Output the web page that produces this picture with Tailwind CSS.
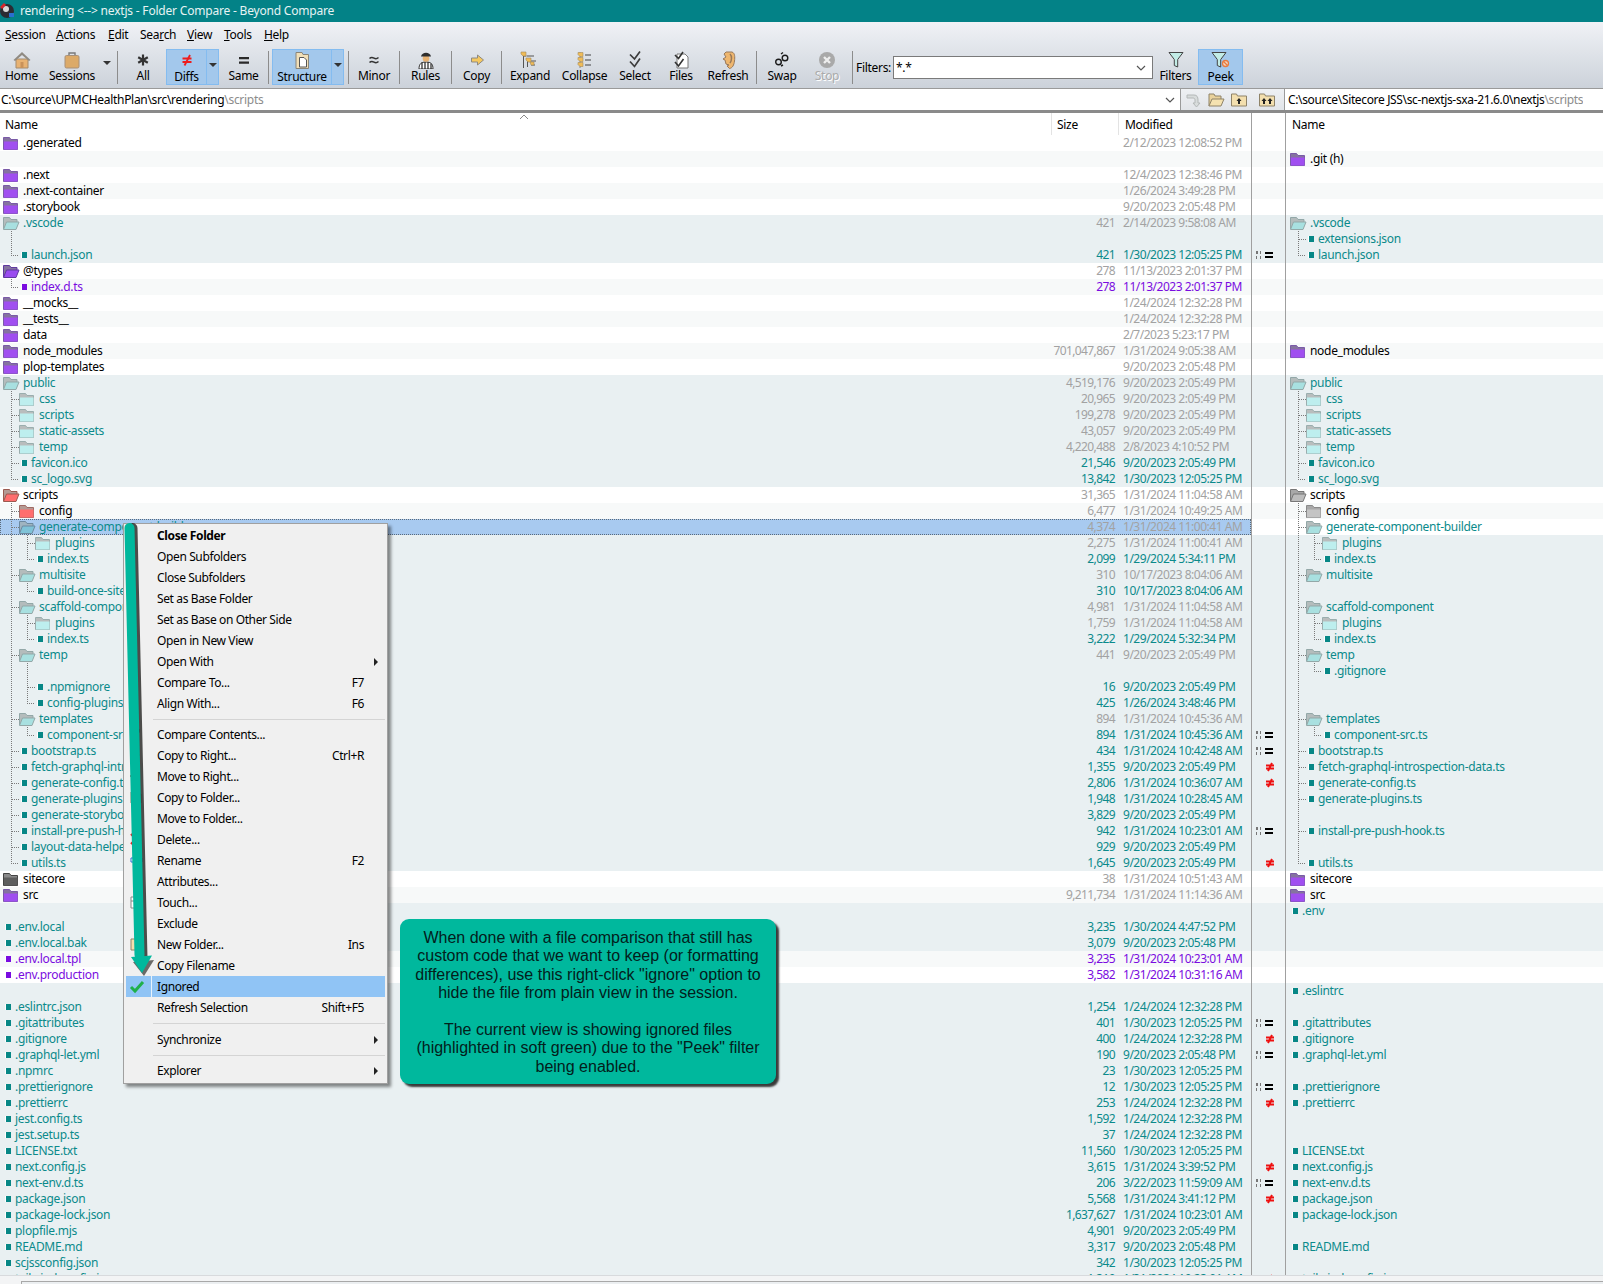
<!doctype html>
<html>
<head>
<meta charset="utf-8">
<title>rendering &lt;--&gt; nextjs - Folder Compare - Beyond Compare</title>
<script src="https://cdn.jsdelivr.net/npm/@tailwindcss/browser@4"></script>
</head>
<body class="m-0 bg-white">
<div class="relative flex h-[1284px] w-[1603px] flex-col overflow-hidden font-['Noto_Sans',sans-serif] text-[12px] leading-4 tracking-[-0.3px] text-black">

  <!-- title bar -->
  <div class="flex h-[22px] shrink-0 items-center bg-[#038287] text-[#e6f3f3]">
    <svg width="16" height="18" viewBox="0 0 16 18" class="ml-0 shrink-0"><circle cx="7" cy="9" r="7" fill="#2b2b33"/><circle cx="6" cy="7" r="3" fill="#d8d8d8"/><path d="M0 5 4 1 6 3 2 7z" fill="#d8262c"/><rect x="9" y="11" width="5" height="4" fill="#2a6fd0"/></svg>
    <span class="ml-[4px] tracking-[-0.2px]">rendering &lt;--&gt; nextjs - Folder Compare - Beyond Compare</span>
  </div>

  <!-- menu + toolbar share one gradient -->
  <div class="h-[66px] shrink-0 bg-gradient-to-b from-[#f0f2f6] to-[#ccd2da]">
    <nav class="flex h-[26px] items-center">
      <span class="ml-[5px] w-[51px]"><u>S</u>ession</span>
      <span class="w-[52px]"><u>A</u>ctions</span>
      <span class="w-[32px]"><u>E</u>dit</span>
      <span class="w-[47px]">Sea<u>r</u>ch</span>
      <span class="w-[37px]"><u>V</u>iew</span>
      <span class="w-[40px]"><u>T</u>ools</span>
      <span><u>H</u>elp</span>
    </nav>
    <div id="toolbar" class="flex h-[40px] items-start">
      <div class="mt-px flex h-9 w-[43px] flex-col items-center"><svg class="mt-[2px] shrink-0" width="20" height="18" viewBox="0 0 20 18"><path d="M4 8h12v9H4z" fill="#e8b272" stroke="#a58b6c"/><path d="M10 1 1.5 9l1.5 1 7-6 7 6 1.5-1z" fill="#8f8a82"/><rect x="8.5" y="11" width="3" height="6" fill="#c9925a"/></svg><span class="leading-[14px]">Home</span></div>
      <div class="mt-px flex h-9 w-[58px] flex-col items-center"><svg class="mt-[2px] shrink-0" width="20" height="18" viewBox="0 0 20 18"><path d="M7 4V2h6v2" fill="none" stroke="#7a7a7a" stroke-width="1.4"/><rect x="3" y="4.500" width="14" height="12.500" rx="1.500" fill="#dcaa68" stroke="#a89078"/></svg><span class="leading-[14px]">Sessions</span></div>
      <div class="flex h-[30px] w-[11px] items-center justify-center"><svg width="8" height="4"><path d="M0 0h8L4 4z" fill="#333"/></svg></div>
      <div class="ml-[5px] mt-[3px] h-[33px] w-px bg-[#8c8c8c]"></div>

      <div class="ml-[2px] mt-px flex h-9 w-[46px] flex-col items-center"><svg class="mt-[2px] shrink-0" width="20" height="18" viewBox="0 0 20 18"><path d="M10 3.500v11M5.200 6.200l9.600 5.600M14.800 6.200l-9.600 5.600" stroke="#333" stroke-width="2.200"/></svg><span class="leading-[14px]">All</span></div>
      <div class="mt-px flex h-9 w-[53px] border border-[#84bcf0] bg-[#a3c8ec]">
        <div class="flex w-[39px] flex-col items-center"><svg class="mt-px shrink-0" width="20" height="18" viewBox="0 0 20 18"><path d="M5.500 7.500h9M5.500 11h9" stroke="#ee1c1c" stroke-width="1.800"/><path d="M13 4 7.500 14.500" stroke="#ee1c1c" stroke-width="1.800"/></svg><span class="leading-[14px] pt-px">Diffs</span></div>
        <div class="flex w-[12px] items-center justify-center border-l border-[#84bcf0] pb-[5px]"><svg width="8" height="4"><path d="M0 0h8L4 4z" fill="#333"/></svg></div>
      </div>
      <div class="mt-px flex h-9 w-[49px] flex-col items-center"><svg class="mt-[2px] shrink-0" width="20" height="18" viewBox="0 0 20 18"><path d="M5 6h10v2.300H5zM5 10.500h10v2.300H5z" fill="#2a2a2a"/></svg><span class="leading-[14px]">Same</span></div>
      <div class="mt-[3px] h-[33px] w-px bg-[#8c8c8c]"></div>

      <div class="ml-[3px] mt-px flex h-9 w-[72px] border border-[#84bcf0] bg-[#a3c8ec]">
        <div class="flex w-[58px] flex-col items-center"><svg class="mt-px shrink-0" width="20" height="18" viewBox="0 0 20 18"><path d="M4 1.500h6l1 2h5.500v14H4z" fill="#f1dfb8" stroke="#8a8578"/><path d="M7.500 6.500h4.500l2.500 2.500v7h-7z" fill="#fff" stroke="#555"/></svg><span class="leading-[14px] pt-px">Structure</span></div>
        <div class="flex w-[12px] items-center justify-center border-l border-[#84bcf0] pb-[5px]"><svg width="8" height="4"><path d="M0 0h8L4 4z" fill="#333"/></svg></div>
      </div>
      <div class="ml-[4px] mt-[3px] h-[33px] w-px bg-[#8c8c8c]"></div>

      <div class="mt-px flex h-9 w-[50px] flex-col items-center"><svg class="mt-[2px] shrink-0" width="20" height="18" viewBox="0 0 20 18"><path d="M5.500 7.500c2-2 3.500-1 4.500-.4s2.800 1 4.500-.6M5.500 11.500c2-2 3.500-1 4.500-.4s2.800 1 4.500-.6" fill="none" stroke="#333" stroke-width="1.500"/></svg><span class="leading-[14px]">Minor</span></div>
      <div class="mt-[3px] h-[33px] w-px bg-[#8c8c8c]"></div>
      <div class="mt-px flex h-9 w-[51px] flex-col items-center"><svg class="mt-[2px] shrink-0" width="20" height="18" viewBox="0 0 20 18"><path d="M3 18c0-5 2-7 7-7s7 2 7 7z" fill="#fff" stroke="#333"/><path d="M6 11.500V18M9 11V18M12 11V18M15 12.500V18" stroke="#222" stroke-width="1.200"/><circle cx="10" cy="7.500" r="3.300" fill="#e8b272"/><path d="M5 5.500C6 .5 14 .5 15 5.500z" fill="#2e2e2e"/></svg><span class="leading-[14px]">Rules</span></div>
      <div class="mt-[3px] h-[33px] w-px bg-[#8c8c8c]"></div>
      <div class="mt-px flex h-9 w-[49px] flex-col items-center"><svg class="mt-[2px] shrink-0" width="20" height="18" viewBox="0 0 20 18"><path d="M4.500 7h6V4l6 5-6 5v-3h-6z" fill="#f5c85f" stroke="#8f8a80"/></svg><span class="leading-[14px]">Copy</span></div>
      <div class="mt-[3px] h-[33px] w-px bg-[#8c8c8c]"></div>

      <div class="mt-px flex h-9 w-[56px] flex-col items-center"><svg class="mt-[2px] shrink-0" width="20" height="18" viewBox="0 0 20 18"><path d="M3.500 3v14M7.500 9v7M3.500 5h3M7 5h7M11 10h5M11 14h4" stroke="#555" fill="none"/><path d="M1 1h5v4H3L1 3zM6 7h5v4H8L6 9zM10 11h4v3h-3z" fill="#f0bc58" stroke="#a58b5c" stroke-width=".6"/></svg><span class="leading-[14px]">Expand</span></div>
      <div class="mt-px flex h-9 w-[53px] flex-col items-center"><svg class="mt-[2px] shrink-0" width="20" height="18" viewBox="0 0 20 18"><path d="M5 1v16" stroke="#888"/><path d="M10 4h6M10 9h6M10 14h6" stroke="#444" stroke-width="1.200"/><path d="M3 1.500h5v4H5L3 3.500zM3 6.500h5v4H5L3 8.500zM3 11.500h5v4H5l-2-2z" fill="#f0bc58" stroke="#a58b5c" stroke-width=".6"/></svg><span class="leading-[14px]">Collapse</span></div>
      <div class="mt-px flex h-9 w-[48px] flex-col items-center"><svg class="mt-[2px] shrink-0" width="20" height="18" viewBox="0 0 20 18"><path d="M5 3.500 9.500 8 15 .5M5 10.500l4.500 5L15 7.500" fill="none" stroke="#3c3c3c" stroke-width="1.700"/></svg><span class="leading-[14px]">Select</span></div>
      <div class="mt-px flex h-9 w-[44px] flex-col items-center"><svg class="mt-[2px] shrink-0" width="20" height="18" viewBox="0 0 20 18"><path d="M6 3h8l3 3v11H6z" fill="#fff" stroke="#777"/><path d="M4 4l3.500 3.500L12 1M4 11l3.500 4 5-7" fill="none" stroke="#333" stroke-width="1.600"/></svg><span class="leading-[14px]">Files</span></div>
      <div class="mt-px flex h-9 w-[50px] flex-col items-center"><svg class="mt-[2px] shrink-0" width="20" height="18" viewBox="0 0 20 18"><path d="M8 1h6c3 1 3 5 2.500 9-.5 4-2 7-5 7.500L9 15l2-1-3-1-1-4-2-1 3-2-2-3z" fill="#eeb66e" stroke="#98785a"/><path d="M12 3c2 2 2 6 0 9" fill="none" stroke="#98785a" stroke-width="1.500"/></svg><span class="leading-[14px]">Refresh</span></div>
      <div class="ml-[3px] mt-[3px] h-[33px] w-px bg-[#8c8c8c]"></div>

      <div class="mt-px flex h-9 w-[50px] flex-col items-center"><svg class="mt-[2px] shrink-0" width="20" height="18" viewBox="0 0 20 18"><circle cx="6.500" cy="11" r="2.800" fill="none" stroke="#1a1a1a" stroke-width="1.400"/><circle cx="13" cy="7" r="2.800" fill="none" stroke="#1a1a1a" stroke-width="1.400"/><path d="M9 3l2-1.500M11 14l-2 1" stroke="#1a1a1a" stroke-width="1.400"/></svg><span class="leading-[14px]">Swap</span></div>
      <div class="mt-px flex h-9 w-[40px] flex-col items-center"><svg class="mt-[2px] shrink-0" width="20" height="18" viewBox="0 0 20 18"><circle cx="10" cy="9" r="8" fill="#a9a9a9"/><path d="M7 6l6 6M13 6l-6 6" stroke="#eee" stroke-width="2.400"/></svg><span class="leading-[14px] text-[#ababab] [text-shadow:1px_1px_0_#fff]">Stop</span></div>
      <div class="ml-[5px] mt-[3px] h-[33px] w-px bg-[#8c8c8c]"></div>

      <span class="ml-[3px] mt-[12px] w-[34px]">Filters:</span>
      <div class="ml-[3px] mt-[8px] flex h-[23px] w-[260px] items-center border border-[#7a7a7a] bg-white pl-[2px] pr-[6px]"><span class="flex-1 text-[12px] leading-4">*.*</span><svg width="10" height="6"><path d="M1 1l4 4 4-4" fill="none" stroke="#555" stroke-width="1.200"/></svg></div>
      <div class="mt-px flex h-9 w-[45px] flex-col items-center"><svg class="mt-[2px] shrink-0" width="20" height="18" viewBox="0 0 20 18"><path d="M3 1.500h14L11.700 8.500V16l-3.400-1.500v-6z" fill="#c2ece6" stroke="#444"/></svg><span class="leading-[14px]">Filters</span></div>
      <div class="mt-px flex h-9 w-[45px] flex-col items-center border border-[#84bcf0] bg-[#a3c8ec]"><svg class="mt-px shrink-0" width="20" height="18" viewBox="0 0 20 18"><path d="M1 1.500h14L9.700 8.500V16l-3.400-1.500v-6z" fill="#c2ece6" stroke="#444"/><circle cx="14.500" cy="12.500" r="3" fill="#f3d6c0" stroke="#e87a3c" stroke-width="1.300"/><path d="M12.500 10.500l4 4" stroke="#e87a3c" stroke-width="1.300"/></svg><span class="leading-[14px] pt-px">Peek</span></div>
    </div>
  </div>

  <!-- address bars -->
  <div class="flex h-[25px] shrink-0 border-b-[3px] border-t border-b-[#8a8a8a] border-t-[#9a9a9a] bg-[#e6e9ed]">
    <div class="flex w-[1181px] items-center border-r border-[#9a9a9a] bg-white pl-px pr-[5px]">
      <span class="flex-1 truncate">C:\source\UPMCHealthPlan\src\rendering<span class="text-[#8c8c8c]">\scripts</span></span>
      <svg width="10" height="6"><path d="M1 1l4 4 4-4" fill="none" stroke="#555" stroke-width="1.200"/></svg>
    </div>
    <div class="flex w-[103px] items-center bg-gradient-to-b from-[#eef0f3] to-[#e2e5e9]">
      <svg class="ml-[5px]" width="16" height="16" viewBox="0 0 16 16"><path d="M1 3h7c3 0 4 2 4 5v3h2l-3.500 4L7 11h2V8c0-1-.5-2-2-2H1z" fill="#d8dcdc" stroke="#b4b8b8"/></svg>
      <svg class="ml-[6px]" width="17" height="15" viewBox="0 0 17 15"><path d="M1 14V2h5l1 2h6v3" fill="#e9d29c" stroke="#8f8368"/><path d="M1 14l3-7h12l-3 7z" fill="#f5e2b0" stroke="#8f8368"/></svg>
      <svg class="ml-[6px]" width="16" height="15" viewBox="0 0 16 15"><path d="M.5 14V2h5l1 2h9v10z" fill="#f3dfae" stroke="#8f8368"/><path d="M8 6l-2.500 3H7v3h2V9h1.500z" fill="#222"/></svg>
      <svg class="ml-[12px]" width="16" height="15" viewBox="0 0 16 15"><path d="M.5 14V2h5l1 2h9v10z" fill="#f3dfae" stroke="#8f8368"/><path d="M5 6 2.500 9H4v3h2V9h1.500zM11 6 8.500 9H10v3h2V9h1.500z" fill="#222"/></svg>
    </div>
    <div class="flex flex-1 items-center border-l border-[#9a9a9a] bg-white pl-[3px]"><span class="truncate tracking-[-0.35px]">C:\source\Sitecore JSS\sc-nextjs-sxa-21.6.0\nextjs<span class="text-[#8c8c8c]">\scripts</span></span></div>
  </div>

  <!-- column headers -->
  <div class="flex h-[22px] shrink-0 bg-white">
    <div class="flex w-[1051px] shrink-0 pt-[4px]"><span class="w-[519px] pl-[5px]">Name</span><svg class="-mt-[3px]" width="10" height="6"><path d="M1 5l4-4 4 4" fill="none" stroke="#888"/></svg></div>
    <div class="w-[67px] shrink-0 border-l border-[#e3e3e3] pl-[5px] pt-[4px]">Size</div>
    <div class="w-[133px] shrink-0 border-l border-[#e3e3e3] pl-[6px] pt-[4px]">Modified</div>
    <div class="w-[35px] shrink-0 border-x border-[#a0a0a0]"></div>
    <div class="flex-1 pl-[6px] pt-[4px]">Name</div>
  </div>

  <!-- comparison rows -->
  <div id="rows" class="h-[1140px] shrink-0 overflow-hidden"></div>

  <!-- bottom edge -->
  <div class="flex flex-1 flex-col border-t border-[#d8dadd] bg-[#f3f4f5] pl-[21px] pt-[5px]"><div class="flex-1 border-l border-t border-[#a8a8a8] bg-[#eceff1]"></div></div>

  <!-- context menu -->
  <div id="menu" class="absolute left-[123px] top-[523px] flex w-[265px] flex-col border border-[#a0a0a0] bg-[#f0f0f0] pb-[2px] pt-px tracking-[-0.38px] shadow-[3px_3px_3px_rgba(0,0,0,0.45)]"></div>

  <!-- annotation arrow -->
  <svg class="pointer-events-none absolute left-[110px] top-[515px]" width="60" height="470" viewBox="110 515 60 470">
    <path d="M132.500 528 142.500 958" stroke="#30302e" stroke-width="10" stroke-linecap="round" opacity=".85"/>
    <path d="M133 962 154 960 144 976z" fill="#30302e" opacity=".7"/>
    <path d="M129.500 528 139.500 955" stroke="#00b89d" stroke-width="10" stroke-linecap="round"/>
    <path d="M131 957 152 955.500 142 973z" fill="#00b89d"/>
  </svg>

  <!-- annotation callout -->
  <div class="absolute left-[400px] top-[919px] h-[165px] w-[376px] rounded-[9px] bg-[#00b89d] pt-[10px] text-center font-['Liberation_Sans',sans-serif] text-[16px] leading-[18.4px] tracking-normal text-[#03201b] shadow-[3px_3px_2px_#3a3a3a]">
    When done with a file comparison that still has<br>custom code that we want to keep (or formatting<br>differences), use this right-click "ignore" option to<br>hide the file from plain view in the session.<br><br>The current view is showing ignored files<br>(highlighted in soft green) due to the "Peek" filter<br>being enabled.
  </div>
</div>

<script>
const K={
 pc:['#85739f','#a04ff0','#7a5aa8',0], po:['#85739f','#9a4cf0','#5f3aa0',1],
 rc:['#b49a94','#ff6e6e','#a06a64',0], ro:['#b49a94','#ff6e6e','#9a5a50',1],
 gc:['#a8a8a8','#c4c4c4','#8a8a8a',0], go:['#a8a8a8','#bdbdbd','#777777',1],
 dc:['#8a8a8a','#5e5e5e','#444444',0],
 cc:['#b9bdbd','#bdeeee','#9aaeae',0], co:['#b4bcbc','#a8e0e0','#93a8a8',1], so:['#9fb4c0','#7fc3d8','#6d8aa0',1]
};
const TXT={b:'text-black',t:'text-[#0b8a8b]',p:'text-[#7a0ce0]',g:'text-[#a2a2a2]'};
const SQ={t:'bg-[#078786]',p:'bg-[#7a0ce0]'};
function folder(k){const [tab,body,edge,open]=K[k];
 return open
 ?`<svg class="shrink-0" width="20" height="16" viewBox="0 0 20 16"><path d="M.5 14V2.500h6l1.500 2h6V7" fill="${tab}" stroke="${edge}"/><path d="M.5 14.500 3.500 7H16l-3 7.500z" fill="${body}" stroke="${edge}"/></svg>`
 :`<svg class="shrink-0" width="20" height="16" viewBox="0 0 20 16"><path d="M.5 2.500h6l1.500 2h6.500v10H.5z" fill="${tab}" stroke="${edge}"/><path d="M1 6.500h13.500v8H1z" fill="${body}"/></svg>`;}
function guide(c){const d={T:'M8.500 0V16M8.500 8.500H16',L:'M8.500 0V8.500H16',I:'M8.500 0V16',' ':''}[c];
 return `<svg class="shrink-0" width="16" height="16"><path d="${d}" fill="none" stroke="#7a7a7a" stroke-dasharray="1 1" shape-rendering="crispEdges"/></svg>`;}
function name(e,pad,clip){ if(!e) return `<div class="flex h-4 min-w-0 flex-1 ${pad}"></div>`;
 const [g,k,n,c]=e; let h=[...g].map(guide).join('');
 if(k) h+=folder(k); else if(n) h+=`<span class="flex w-3 shrink-0 items-center"><span class="ml-[3px] h-[6px] w-[5px] ${SQ[c]} shadow-[-1px_0_0_#fff]"></span></span>`;
 h+=`<span class="${TXT[c]||''}">${n||''}</span>`;
 if(clip) h=`<div class="flex h-4 w-[120px] shrink-0 items-center overflow-hidden">${h}</div>`;
 return `<div class="flex h-4 min-w-0 flex-1 items-center whitespace-nowrap ${pad}">${h}</div>`;}
const NE=`<svg class="ml-[13px]" width="10" height="12" viewBox="0 0 10 12"><path d="M1 4.500h8M1 7.500h8M7 2 3 10" stroke="#ee1010" stroke-width="2" fill="none"/></svg>`;
const EQ=`<svg class="ml-[3px]" width="18" height="10" viewBox="0 0 18 10"><path d="M1 1h2v3H1zM5 1h1v3H5zM1 6h1v3H1zM5 6h1v3H5z" fill="#777"/><path d="M10 2h8v2h-8zM10 6h8v2h-8z" fill="#000"/></svg>`;

const G=new Set([5,6,7,15,16,17,18,19,20,21]);for(let i=25;i<=45;i++)G.add(i);[48,49,50].forEach(i=>G.add(i));for(let i=53;i<=71;i++)G.add(i);

const L={
0:['','pc','.generated','b','','2/12/2023 12:08:52 PM','g'],
2:['','pc','.next','b','','12/4/2023 12:38:46 PM','g'],
3:['','pc','.next-container','b','','1/26/2024 3:49:28 PM','g'],
4:['','pc','.storybook','b','','9/20/2023 2:05:48 PM','g'],
5:['','co','.vscode','t','421','2/14/2023 9:58:08 AM','g'],
6:['I','','','t','','',''],
7:['L','','launch.json','t','421','1/30/2023 12:05:25 PM','t','='],
8:['','po','@types','b','278','11/13/2023 2:01:37 PM','g'],
9:['L','','index.d.ts','p','278','11/13/2023 2:01:37 PM','p'],
10:['','pc','__mocks__','b','','1/24/2024 12:32:28 PM','g'],
11:['','pc','__tests__','b','','1/24/2024 12:32:28 PM','g'],
12:['','pc','data','b','','2/7/2023 5:23:17 PM','g'],
13:['','pc','node_modules','b','701,047,867','1/31/2024 9:05:38 AM','g'],
14:['','pc','plop-templates','b','','9/20/2023 2:05:48 PM','g'],
15:['','co','public','t','4,519,176','9/20/2023 2:05:49 PM','g'],
16:['T','cc','css','t','20,965','9/20/2023 2:05:49 PM','g'],
17:['T','cc','scripts','t','199,278','9/20/2023 2:05:49 PM','g'],
18:['T','cc','static-assets','t','43,057','9/20/2023 2:05:49 PM','g'],
19:['T','cc','temp','t','4,220,488','2/8/2023 4:10:52 PM','g'],
20:['T','','favicon.ico','t','21,546','9/20/2023 2:05:49 PM','t'],
21:['L','','sc_logo.svg','t','13,842','1/30/2023 12:05:25 PM','t'],
22:['','ro','scripts','b','31,365','1/31/2024 11:04:58 AM','g'],
23:['T','rc','config','b','6,477','1/31/2024 10:49:25 AM','g'],
24:['T','so','generate-component-builder','t','4,374','1/31/2024 11:00:41 AM','g'],
25:['IT','cc','plugins','t','2,275','1/31/2024 11:00:41 AM','g'],
26:['IL','','index.ts','t','2,099','1/29/2024 5:34:11 PM','t'],
27:['T','co','multisite','t','310','10/17/2023 8:04:06 AM','g'],
28:['IL','','build-once-site.ts','t','310','10/17/2023 8:04:06 AM','t'],
29:['T','co','scaffold-component','t','4,981','1/31/2024 11:04:58 AM','g'],
30:['IT','cc','plugins','t','1,759','1/31/2024 11:04:58 AM','g'],
31:['IL','','index.ts','t','3,222','1/29/2024 5:32:34 PM','t'],
32:['T','co','temp','t','441','9/20/2023 2:05:49 PM','g'],
33:['II','','','t','','',''],
34:['IT','','.npmignore','t','16','9/20/2023 2:05:49 PM','t'],
35:['IL','','config-plugins.ts','t','425','1/26/2024 3:48:46 PM','t'],
36:['T','co','templates','t','894','1/31/2024 10:45:36 AM','g'],
37:['IL','','component-src.ts','t','894','1/31/2024 10:45:36 AM','t','='],
38:['T','','bootstrap.ts','t','434','1/31/2024 10:42:48 AM','t','='],
39:['T','','fetch-graphql-introspection-data.ts','t','1,355','9/20/2023 2:05:49 PM','t','!'],
40:['T','','generate-config.ts','t','2,806','1/31/2024 10:36:07 AM','t','!'],
41:['T','','generate-plugins.ts','t','1,948','1/31/2024 10:28:45 AM','t'],
42:['T','','generate-storybook.ts','t','3,829','9/20/2023 2:05:49 PM','t'],
43:['T','','install-pre-push-hook.ts','t','942','1/31/2024 10:23:01 AM','t','='],
44:['T','','layout-data-helper.ts','t','929','9/20/2023 2:05:49 PM','t'],
45:['L','','utils.ts','t','1,645','9/20/2023 2:05:49 PM','t','!'],
46:['','dc','sitecore','b','38','1/31/2024 10:51:43 AM','g'],
47:['','pc','src','b','9,211,734','1/31/2024 11:14:36 AM','g'],
49:['','','.env.local','t','3,235','1/30/2024 4:47:52 PM','t'],
50:['','','.env.local.bak','t','3,079','9/20/2023 2:05:48 PM','t'],
51:['','','.env.local.tpl','p','3,235','1/31/2024 10:23:01 AM','p'],
52:['','','.env.production','p','3,582','1/31/2024 10:31:16 AM','p'],
54:['','','.eslintrc.json','t','1,254','1/24/2024 12:32:28 PM','t'],
55:['','','.gitattributes','t','401','1/30/2023 12:05:25 PM','t','='],
56:['','','.gitignore','t','400','1/24/2024 12:32:28 PM','t','!'],
57:['','','.graphql-let.yml','t','190','9/20/2023 2:05:48 PM','t','='],
58:['','','.npmrc','t','23','1/30/2023 12:05:25 PM','t'],
59:['','','.prettierignore','t','12','1/30/2023 12:05:25 PM','t','='],
60:['','','.prettierrc','t','253','1/24/2024 12:32:28 PM','t','!'],
61:['','','jest.config.ts','t','1,592','1/24/2024 12:32:28 PM','t'],
62:['','','jest.setup.ts','t','37','1/24/2024 12:32:28 PM','t'],
63:['','','LICENSE.txt','t','11,560','1/30/2023 12:05:25 PM','t'],
64:['','','next.config.js','t','3,615','1/31/2024 3:39:52 PM','t','!'],
65:['','','next-env.d.ts','t','206','3/22/2023 11:59:09 AM','t','='],
66:['','','package.json','t','5,568','1/31/2024 3:41:12 PM','t','!'],
67:['','','package-lock.json','t','1,637,627','1/31/2024 10:23:01 AM','t'],
68:['','','plopfile.mjs','t','4,901','9/20/2023 2:05:49 PM','t'],
69:['','','README.md','t','3,317','9/20/2023 2:05:48 PM','t'],
70:['','','scjssconfig.json','t','342','1/30/2023 12:05:25 PM','t'],
71:['','','tailwind.config.js','t','1,310','1/31/2024 10:23:01 AM','t','!']
};
const R={
1:['','pc','.git (h)','b'],5:['','co','.vscode','t'],6:['T','','extensions.json','t'],7:['L','','launch.json','t'],
13:['','pc','node_modules','b'],15:['','co','public','t'],16:['T','cc','css','t'],17:['T','cc','scripts','t'],18:['T','cc','static-assets','t'],19:['T','cc','temp','t'],20:['T','','favicon.ico','t'],21:['L','','sc_logo.svg','t'],
22:['','go','scripts','b'],23:['T','gc','config','b'],24:['T','co','generate-component-builder','t'],25:['IT','cc','plugins','t'],26:['IL','','index.ts','t'],27:['T','co','multisite','t'],28:['I','','','t'],29:['T','co','scaffold-component','t'],30:['IT','cc','plugins','t'],31:['IL','','index.ts','t'],32:['T','co','temp','t'],33:['IL','','.gitignore','t'],34:['I','','','t'],35:['I','','','t'],36:['T','co','templates','t'],37:['IL','','component-src.ts','t'],38:['T','','bootstrap.ts','t'],39:['T','','fetch-graphql-introspection-data.ts','t'],40:['T','','generate-config.ts','t'],41:['T','','generate-plugins.ts','t'],42:['I','','','t'],43:['T','','install-pre-push-hook.ts','t'],44:['I','','','t'],45:['L','','utils.ts','t'],
46:['','pc','sitecore','b'],47:['','pc','src','b'],48:['','','.env','t'],53:['','','.eslintrc','t'],55:['','','.gitattributes','t'],56:['','','.gitignore','t'],57:['','','.graphql-let.yml','t'],59:['','','.prettierignore','t'],60:['','','.prettierrc','t'],63:['','','LICENSE.txt','t'],64:['','','next.config.js','t'],65:['','','next-env.d.ts','t'],66:['','','package.json','t'],67:['','','package-lock.json','t'],69:['','','README.md','t'],71:['','','tailwind.config.js','t']
};
let out='';
for(let i=0;i<72;i++){
 const bg=G.has(i)?'bg-[#e9f0f2]':(i%2?'bg-[#f7f9f9]':'bg-white');
 const l=L[i]||[];
 const sel=i===24?'bg-[#a8caf0] outline-1 outline-dotted outline-[#5a6a7a] -outline-offset-1':'';
 const mark=l[7]==='='?EQ:l[7]==='!'?NE:'';
 out+=`<div class="flex h-4 ${bg}">
  <div class="flex h-4 w-[1251px] shrink-0 ${sel}">${name(L[i],'pl-[3px]',i>24&&i<46)}
   <span class="w-[115px] shrink-0 text-right tracking-[-0.6px] ${TXT[l[6]]||''}">${l[4]||''}</span>
   <span class="ml-[8px] w-[128px] shrink-0 whitespace-nowrap tracking-[-0.48px] ${TXT[l[6]]||''}">${l[5]||''}</span></div>
  <div class="flex h-4 w-[35px] shrink-0 items-center border-x border-[#a0a0a0]">${mark}</div>
  ${name(R[i],'pl-[4px]',false)}
 </div>`;
}
document.getElementById('rows').innerHTML=out;

const MI={
 q:'<path d="M3 4c0-4 7-4 7 0 0 3-3 3-3 6M7 12v1.500" fill="none" stroke="#333" stroke-width="1.500"/>',
 r:'<path d="M1 7h8M6 3l4 4-4 4" fill="none" stroke="#8a5a3a" stroke-width="1.600"/>',
 m:'<path d="M1 7h8M6 3l4 4-4 4" fill="none" stroke="#b03a2a" stroke-width="1.600"/>',
 c:'<path d="M2 2h5l1 2h4v9H2z" fill="#e9d29c" stroke="#8f8368"/>',
 f:'<path d="M10 1 3 7l7 6z" fill="#e81c1c"/>',
 x:'<path d="M2 2l10 10M12 2 2 12" stroke="#e81c1c" stroke-width="2.200"/>',
 n:'<path d="M2 5h11v4H2z" fill="#fff" stroke="#2a6fd0"/><path d="M4 7h6" stroke="#2a6fd0" stroke-width="1.400"/>',
 t:'<path d="M2 2h11v11H2zM2 6h11M6 2v11" fill="#fff" stroke="#888"/><path d="M7 7h4v4H7z" fill="#e88a3a"/>',
 w:'<path d="M2 2h5l1 2h5v9H2z" fill="#f3dfae" stroke="#8f8368"/>'
};
const M=[['b','Close Folder'],['','Open Subfolders'],['','Close Subfolders'],['','Set as Base Folder'],['','Set as Base on Other Side'],['','Open in New View'],['>','Open With'],['','Compare To...','F7'],['','Align With...','F6'],['-'],
['','Compare Contents...','','q'],['','Copy to Right...','Ctrl+R','r'],['','Move to Right...','','m'],['','Copy to Folder...','','c'],['','Move to Folder...','','f'],['','Delete...','','x'],['','Rename','F2','n'],['','Attributes...'],['','Touch...','','t'],['','Exclude'],['','New Folder...','Ins','w'],['','Copy Filename'],['c','Ignored'],['','Refresh Selection','Shift+F5'],['-s'],['>','Synchronize'],['-'],['>','Explorer']];
let mh='';
for(const [t,n,s,ic] of M){
 if(t==='-'||t==='-s'){mh+=`<div class="flex ${t==='-s'?'h-[11px]':'h-[10px]'} items-center pl-[29px] pr-[2px]"><div class="h-px w-full bg-[#d4d4d4]"></div></div>`;continue;}
 const tri=t==='>'?'<svg width="4" height="8"><path d="M0 0l4 4-4 4z" fill="#222"/></svg>':'';
 const icon=ic?`<svg class="ml-[5px] shrink-0" width="15" height="15" viewBox="0 0 15 15">${MI[ic]}</svg>`:'';
 if(t==='c'){mh+=`<div class="mx-[2px] flex h-[21px] items-center bg-[#90c4f5]"><span class="flex w-[25px] shrink-0 pl-[3px]"><svg width="16" height="14" viewBox="0 0 16 14"><path d="M2 7l4 4 8-9" fill="none" stroke="#1fb04a" stroke-width="3"/></svg></span><span class="h-full w-px shrink-0 bg-[#e8f2fb]"></span><span class="pl-[5px]">${n}</span></div>`;continue;}
 mh+=`<div class="flex h-[21px] items-center whitespace-nowrap"><span class="flex w-[33px] shrink-0">${icon}</span><span class="flex-1 ${t==='b'?'font-bold':''}">${n}</span><span>${s||''}</span><span class="flex w-[23px] shrink-0 justify-center">${tri}</span></div>`;
}
document.getElementById('menu').innerHTML=mh;
</script>
</body>
</html>
